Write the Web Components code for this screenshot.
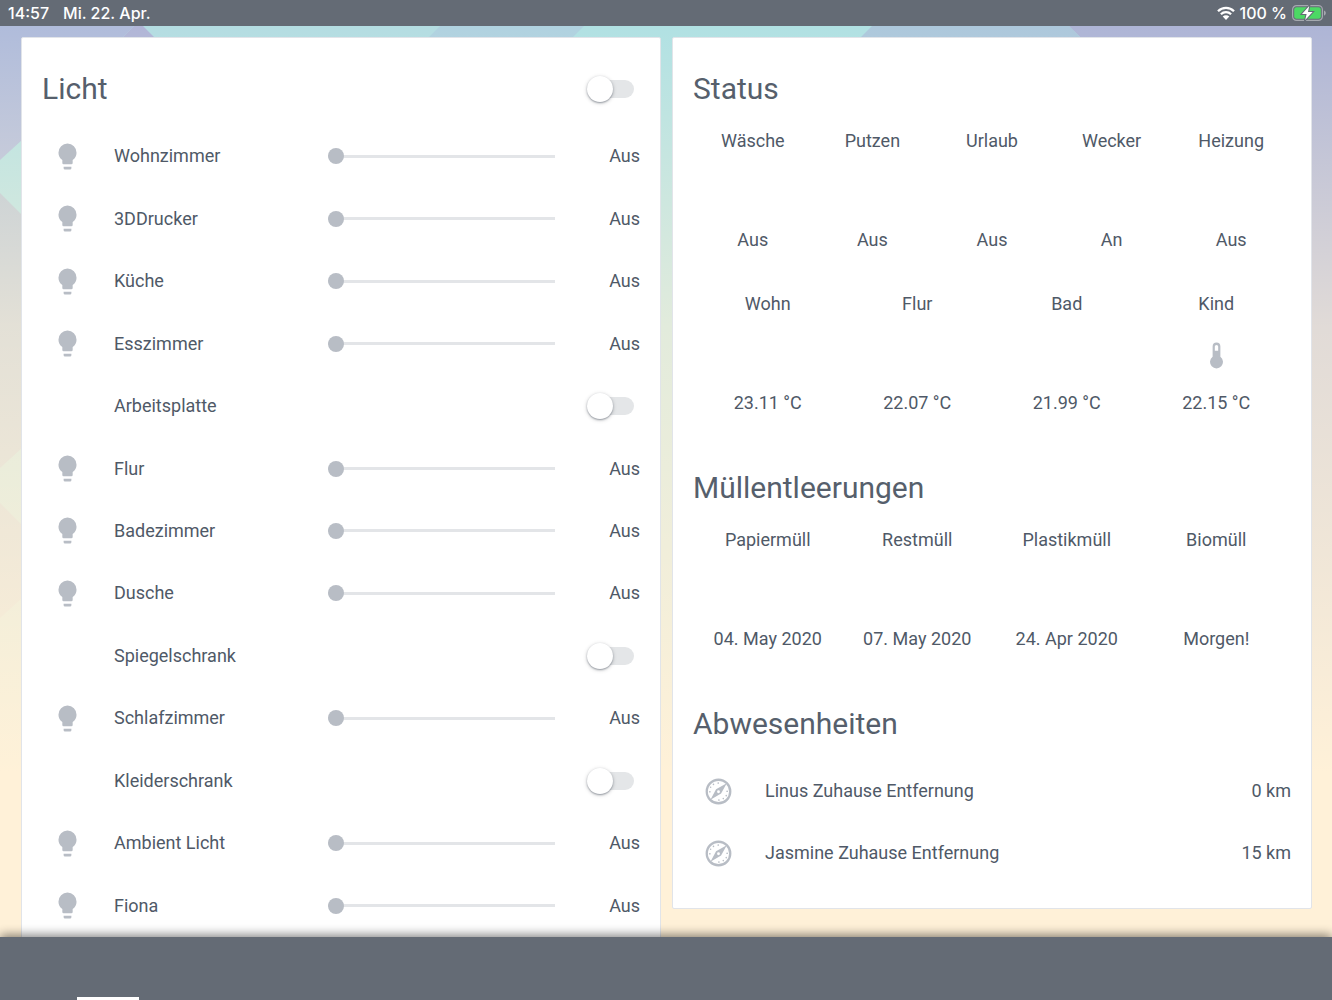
<!DOCTYPE html>
<html lang="de">
<head>
<meta charset="utf-8">
<meta name="viewport" content="width=device-width, initial-scale=1">
<title>Licht und Status</title>
<style>
  html, body { height: 100%; margin: 0; }
  body { font-family: Roboto, "Liberation Sans", sans-serif; font-size: 18px; line-height: 24px; color: #4f5967; }
</style>
</head>
<body>
<dash-app>
  <status-bar slot="top" time="14:57" date="Mi. 22. Apr." battery="100 %"></status-bar>
  <dash-card>
    <card-header heading="Licht"><toggle-switch label="Licht"></toggle-switch></card-header>
    <entity-list rows="13">
      <light-row name="Wohnzimmer"></light-row>
      <light-row name="3DDrucker"></light-row>
      <light-row name="Küche"></light-row>
      <light-row name="Esszimmer"></light-row>
      <switch-row name="Arbeitsplatte"></switch-row>
      <light-row name="Flur"></light-row>
      <light-row name="Badezimmer"></light-row>
      <light-row name="Dusche"></light-row>
      <switch-row name="Spiegelschrank"></switch-row>
      <light-row name="Schlafzimmer"></light-row>
      <switch-row name="Kleiderschrank"></switch-row>
      <light-row name="Ambient Licht"></light-row>
      <light-row name="Fiona"></light-row>
    </entity-list>
  </dash-card>
  <dash-card>
    <card-header heading="Status"></card-header>
    <glance-group>
      <glance-line>
        <glance-item name="Wäsche" value="Aus"></glance-item>
        <glance-item name="Putzen" value="Aus"></glance-item>
        <glance-item name="Urlaub" value="Aus"></glance-item>
        <glance-item name="Wecker" value="An"></glance-item>
        <glance-item name="Heizung" value="Aus"></glance-item>
      </glance-line>
      <glance-line>
        <glance-item name="Wohn" value="23.11 °C"></glance-item>
        <glance-item name="Flur" value="22.07 °C"></glance-item>
        <glance-item name="Bad" value="21.99 °C"></glance-item>
        <glance-item name="Kind" value="22.15 °C"><dash-icon name="thermometer"></dash-icon></glance-item>
      </glance-line>
    </glance-group>
    <card-header heading="Müllentleerungen"></card-header>
    <glance-group>
      <glance-line>
        <glance-item name="Papiermüll" value="04. May 2020"></glance-item>
        <glance-item name="Restmüll" value="07. May 2020"></glance-item>
        <glance-item name="Plastikmüll" value="24. Apr 2020"></glance-item>
        <glance-item name="Biomüll" value="Morgen!"></glance-item>
      </glance-line>
    </glance-group>
    <card-header heading="Abwesenheiten"></card-header>
    <entity-list rows="2">
      <distance-row name="Linus Zuhause Entfernung" value="0 km"></distance-row>
      <distance-row name="Jasmine Zuhause Entfernung" value="15 km"></distance-row>
    </entity-list>
  </dash-card>
  <tab-bar slot="bottom"></tab-bar>
</dash-app>

<script>
const define = (name, render) => customElements.define(name, class extends HTMLElement {
  connectedCallback() {
    if (this.shadowRoot) return;
    this.attachShadow({ mode: 'open' }).innerHTML = render(this);
  }
});
const attr = (el, n) => el.getAttribute(n) || '';

define('dash-app', () => `
  <style>
    :host { display: flex; flex-direction: column; height: 100vh; overflow: hidden; }
    main { flex: 1; min-height: 0; position: relative; overflow: hidden; background: #fff1d8; }
    .wall { position: absolute; inset: 0; width: 100%; height: 100%; }
    .columns { position: relative; display: grid; grid-template-columns: 1fr 1fr; align-items: start; gap: 11px; padding: 11px 20px 0 21px; }
  </style>
  <slot name="top"></slot>
  <main>
    <svg class="wall" viewBox="0 0 1332 911" preserveAspectRatio="none" aria-hidden="true">
      <defs><linearGradient id="fade" x1="0" y1="0" x2="0" y2="1">
        <stop offset="0" stop-color="#fff1d8" stop-opacity="0"/>
        <stop offset=".33" stop-color="#fff1d8" stop-opacity=".63"/>
        <stop offset=".82" stop-color="#fff1d8"/>
      </linearGradient></defs>
      <rect width="1332" height="911" fill="#b1e1e3"/>
      <path fill="#b4dde2" d="M100 0H440L403 37H100Z"/>
      <path fill="#b0bcdb" d="M0 0H134L97 37H22V114L0 134Z"/>
      <path fill="#b1b6d7" d="M134 0H143L180 37H97Z"/>
      <path fill="#b0d2e0" d="M440 0H584L547 37H403Z"/>
      <path fill="#adc8dc" d="M872 0H1069L1106 37H835Z"/>
      <path fill="#aeb5d6" d="M1069 0H1332V911H1200V130Z"/>
      <path fill="#b4c4d4" d="M0 167L22 189V422L0 442Z"/>
      <path fill="#b4c4d4" d="M0 477L22 499V572L0 592Z"/>
      <rect width="1332" height="911" fill="url(#fade)"/>
    </svg>
    <div class="columns"><slot></slot></div>
  </main>
  <slot name="bottom"></slot>`);

define('status-bar', el => `
  <style>
    :host { display: flex; justify-content: space-between; align-items: center; flex: none; height: 26px; padding: 0 6px 0 8px;
      background: #646b75; color: #fff; font: 500 16px/26px Inter, "Liberation Sans", sans-serif; }
    div { display: flex; align-items: center; }
    .left { gap: 14px; } .right { gap: 5px; }
    svg { display: block; }
  </style>
  <div class="left"><span>${attr(el, 'time')}</span><span>${attr(el, 'date')}</span></div>
  <div class="right">
    <svg width="18" height="14" viewBox="0 0 18 14" aria-hidden="true">
      <g fill="none" stroke="#fff" stroke-width="2.3"><path d="M1 5.2A11.4 11.4 0 0 1 17 5.2"/><path d="M3.9 8.2A7.3 7.3 0 0 1 14.1 8.2"/></g>
      <path fill="#fff" d="M9 14L5.7 10.6A4.7 4.7 0 0 1 12.3 10.6Z"/>
    </svg>
    <span>${attr(el, 'battery')}</span>
    <svg width="34" height="16" viewBox="0 0 34 16" aria-hidden="true">
      <rect x=".6" y=".6" width="29.8" height="14.8" rx="4" fill="none" stroke="#a5a9af" stroke-width="1.2"/>
      <rect x="2.2" y="2.2" width="26.6" height="11.6" rx="2.4" fill="#4cd964"/>
      <path fill="#a5a9af" d="M32 5.4C34.4 6.4 34.4 9.6 32 10.6Z"/>
      <path fill="#fff" stroke="#646b75" stroke-width="2" paint-order="stroke" d="M17.2 1L10 9H14.6L13.2 15L20.6 7H16Z"/>
    </svg>
  </div>`);

define('tab-bar', () => `
  <style>
    :host { display: flex; align-items: flex-end; flex: none; height: 63px; padding-left: 77px; background: #646b75;
      position: relative; box-shadow: 0 -2px 10px rgba(0,0,0,.5); }
    nav { width: 62px; height: 3px; background: #fff; }
  </style>
  <nav aria-label="Ansichten"></nav>`);

define('dash-card', () => `
  <style>
    :host { display: block; box-sizing: border-box; padding: 0 20px 24px; background: #fff; border: 1px solid #e1e4e9; border-radius: 2px; }
  </style><slot></slot>`);

define('card-header', el => `
  <style>
    :host { display: flex; justify-content: space-between; align-items: center; padding: 24px 0 10px; }
    h2 { margin: 0; font-size: 30px; line-height: 53px; font-weight: 400; color: #565f6c; }
  </style><h2>${attr(el, 'heading')}</h2><slot></slot>`);

define('entity-list', el => `
  <style>
    :host { display: grid; grid-auto-rows: 1fr; min-height: ${el.getAttribute('rows') === '2' ? '124px' : '812px'}; }
  </style><slot></slot>`);

const icons = {
  lightbulb: '<path d="M12,2A7,7 0 0,0 5,9C5,11.38 6.19,13.47 8,14.74V17A1,1 0 0,0 9,18H15A1,1 0 0,0 16,17V14.74C17.81,13.47 19,11.38 19,9A7,7 0 0,0 12,2M9,21A1,1 0 0,0 10,22H14A1,1 0 0,0 15,21V20H9V21Z"/>',
  thermometer: '<path fill-rule="evenodd" d="M15 13V5A3 3 0 0 0 9 5V13A5 5 0 1 0 15 13M12 3.8A1.3 1.3 0 0 1 13.3 5.1V8.4H10.7V5.1A1.3 1.3 0 0 1 12 3.8Z"/>',
  compass: '<path fill-rule="evenodd" d="M12 2A10 10 0 1 0 12 22A10 10 0 1 0 12 2ZM12 3.8A8.2 8.2 0 1 1 12 20.2A8.2 8.2 0 1 1 12 3.8Z"/><path fill-rule="evenodd" d="M18.4 5.6L14 13.6L5.8 18.3L10.1 10.2ZM12 11.1A1.1 1.1 0 1 0 12.01 13.3A1.1 1.1 0 1 0 12 11.1Z"/><g><circle cx="11.8" cy="5.4" r=".65"/><circle cx="8.1" cy="6.5" r=".6"/><circle cx="5.9" cy="8.7" r=".6"/><circle cx="5.3" cy="12.2" r=".65"/><circle cx="18.7" cy="11.8" r=".65"/><circle cx="18" cy="15.2" r=".6"/><circle cx="15.7" cy="17.5" r=".6"/><circle cx="12.3" cy="18.6" r=".65"/></g>'
};
define('dash-icon', el => `
  <style>
    :host { display: grid; place-items: center; width: 51px; height: 51px; color: #b8bdc5; }
    svg { display: block; width: 31px; height: 31px; fill: currentColor; }
  </style><svg viewBox="0 0 24 24" aria-hidden="true">${icons[attr(el, 'name')] || ''}</svg>`);

define('toggle-switch', el => `
  <style>
    :host { display: block; margin-right: 6px; }
    input { appearance: none; display: block; position: relative; margin: 0; width: 47px; height: 26px; cursor: pointer; }
    input::before { content: ""; position: absolute; inset: 4px 0 4px 5px; border-radius: 9px; background: #e4e6e8; }
    input::after { content: ""; position: absolute; left: 0; top: 0; width: 26px; height: 26px; border-radius: 50%; background: #fff;
      box-shadow: 0 1px 2px rgba(60,70,85,.5), 0 1px 5px rgba(0,0,0,.14); }
    input:checked::after { left: auto; right: 0; }
  </style><input type="checkbox" role="switch" aria-label="${attr(el, 'label')}">`);

const rowStyle = `
    :host { display: flex; align-items: center; }
    .name { flex: 1; margin-left: 21px; }
    .blank { width: 51px; }`;

define('light-row', el => `
  <style>${rowStyle}
    input { appearance: none; width: 227px; height: 16px; margin: 0; background: linear-gradient(#e3e5e8, #e3e5e8) center / 100% 3px no-repeat; }
    input::-webkit-slider-thumb { appearance: none; width: 16px; height: 16px; border-radius: 50%; background: #b8bdc5; }
    .value { width: 85px; text-align: right; }
  </style>
  <dash-icon name="lightbulb"></dash-icon>
  <label class="name" for="level">${attr(el, 'name')}</label>
  <input id="level" type="range" min="0" max="100" value="0">
  <span class="value">Aus</span>`);

define('switch-row', el => `
  <style>${rowStyle}</style>
  <span class="blank"></span><span class="name">${attr(el, 'name')}</span>
  <toggle-switch label="${attr(el, 'name')}"></toggle-switch>`);

define('distance-row', el => `
  <style>${rowStyle}</style>
  <dash-icon name="compass"></dash-icon><span class="name">${attr(el, 'name')}</span><span>${attr(el, 'value')}</span>`);

define('glance-group', () => `
  <style>:host { display: grid; gap: 40px; padding: 4px 0 22px; }</style><slot></slot>`);
define('glance-line', () => `
  <style>:host { display: grid; grid-auto-flow: column; grid-auto-columns: minmax(0, 1fr); }</style><slot></slot>`);
define('glance-item', el => `
  <style>
    :host { display: flex; flex-direction: column; align-items: center; white-space: nowrap; }
    .icon { height: 51px; margin: 14px 0 10px; }
  </style>
  <span>${attr(el, 'name')}</span><div class="icon"><slot></slot></div><span>${attr(el, 'value')}</span>`);
</script>
</body>
</html>
